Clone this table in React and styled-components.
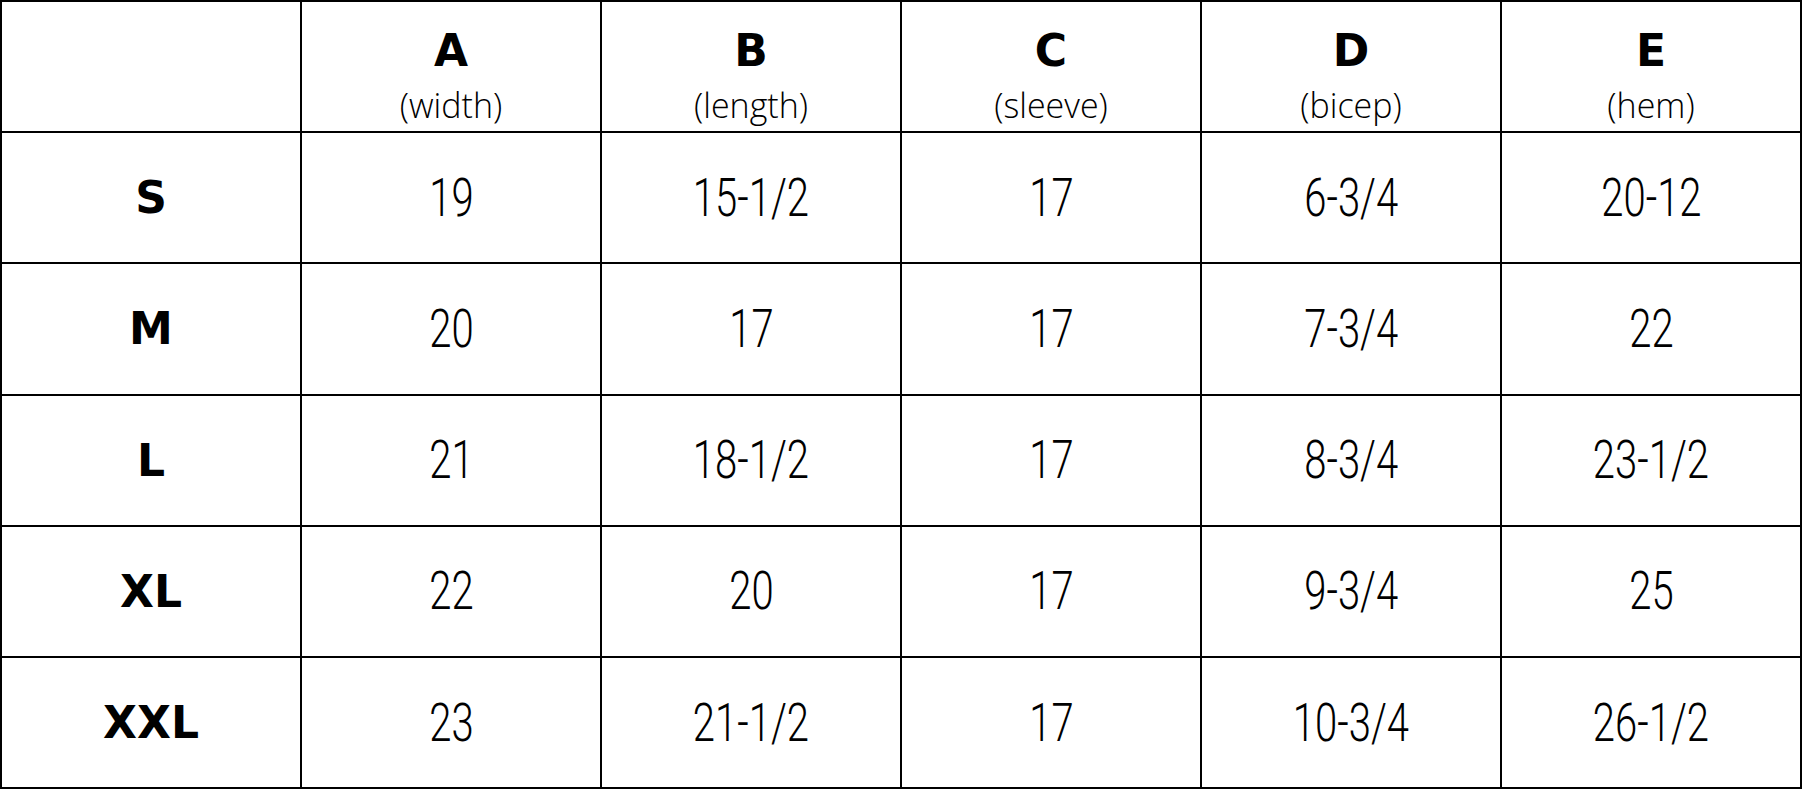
import React from "react";
import styled, { createGlobalStyle } from "styled-components";

const Global = createGlobalStyle`
  html, body { margin: 0; padding: 0; background: #fff; }
  #root { width: 1802px; height: 790px; }
`;

const Table = styled.table`
  width: 1802px;
  border-collapse: collapse;
  table-layout: fixed;
  color: #000;
`;

const Row = styled.tr`
  height: 131.2px;
`;

const Cell = styled.td`
  border: 2px solid #000;
  text-align: center;
  vertical-align: middle;
  padding: 0;
`;

const HeadCell = styled(Cell).attrs({ as: "th" })`
  font-weight: normal;
  vertical-align: top;
  padding-top: 25px;
`;

const HeadStack = styled.div`
  display: flex;
  flex-direction: column;
  align-items: center;
  gap: 11px;
`;

const Letter = styled.span`
  font-family: "DejaVu Sans", sans-serif;
  font-weight: 700;
  font-size: 44px;
  line-height: 48px;
`;

const Sub = styled.span`
  font-family: "Open Sans", sans-serif;
  font-weight: 300;
  font-size: 34px;
  line-height: 38px;
`;

const SizeCell = styled(Cell)`
  font-family: "DejaVu Sans", sans-serif;
  font-weight: 700;
  font-size: 44px;
`;

const ValueCell = styled(Cell)`
  font-family: Roboto, "Liberation Sans", sans-serif;
  font-weight: 300;
  font-size: 53px;
`;

const Narrow = styled.span`
  display: inline-block;
  transform: scaleX(0.755);
  transform-origin: center;
  white-space: nowrap;
`;

const headers = [
  ["A", "(width)"],
  ["B", "(length)"],
  ["C", "(sleeve)"],
  ["D", "(bicep)"],
  ["E", "(hem)"],
];

const rows = [
  ["S", "19", "15-1/2", "17", "6-3/4", "20-12"],
  ["M", "20", "17", "17", "7-3/4", "22"],
  ["L", "21", "18-1/2", "17", "8-3/4", "23-1/2"],
  ["XL", "22", "20", "17", "9-3/4", "25"],
  ["XXL", "23", "21-1/2", "17", "10-3/4", "26-1/2"],
];

export default function App() {
  return (
    <>
      <Global />
      <Table>
        <thead>
          <Row>
            <HeadCell />
            {headers.map(([l, s]) => (
              <HeadCell key={l}>
                <HeadStack>
                  <Letter>{l}</Letter>
                  <Sub>{s}</Sub>
                </HeadStack>
              </HeadCell>
            ))}
          </Row>
        </thead>
        <tbody>
          {rows.map(([size, ...vals]) => (
            <Row key={size}>
              <SizeCell>{size}</SizeCell>
              {vals.map((v, i) => (
                <ValueCell key={i}>
                  <Narrow>{v}</Narrow>
                </ValueCell>
              ))}
            </Row>
          ))}
        </tbody>
      </Table>
    </>
  );
}
